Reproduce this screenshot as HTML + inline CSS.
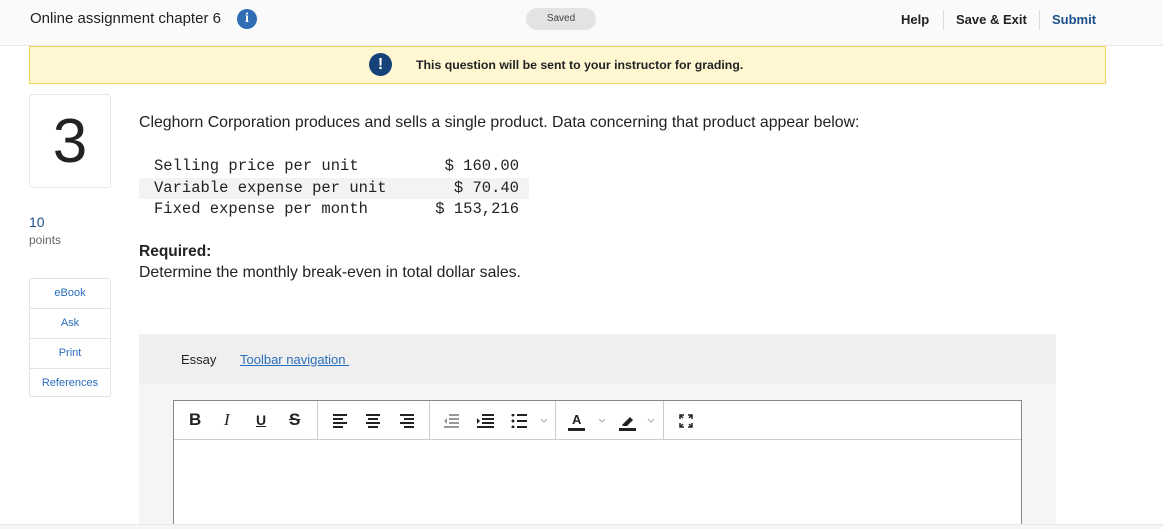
<!DOCTYPE html>
<html><head><meta charset="utf-8"><style>
*{margin:0;padding:0;box-sizing:border-box}
html,body{width:1163px;height:529px;overflow:hidden}
body{background:#fff;font-family:"Liberation Sans",sans-serif;color:#222;position:relative}
.a{position:absolute}
.hdr{left:0;top:0;width:1163px;height:46px;background:#fafafa;border-bottom:1px solid #e8e8e8}
.mono{font-family:"Liberation Mono",monospace;font-size:15.5px;color:#222;white-space:pre}
.side div{height:30px;border-bottom:1px solid #e4e4e4;text-align:center;font-size:11px;color:#2a6ebb;line-height:28px}
.tb{position:absolute;top:0;height:38px;border-right:1px solid #ccc}
.ic{position:absolute;font-size:17px;color:#222;top:9px}
</style></head><body>
<div class="a hdr"></div>
<div class="a" style="left:30px;top:10px;font-size:15px;color:#222">Online assignment chapter 6</div>
<div class="a" style="left:237px;top:9px;width:20px;height:20px;border-radius:50%;background:#2f6db5;color:#fff;font:bold 14px 'Liberation Serif',serif;text-align:center;line-height:20px">i</div>
<div class="a" style="left:526px;top:8px;width:70px;height:22px;border-radius:11px;background:#e3e3e6;font-size:10px;color:#444;text-align:center;line-height:22px">Saved</div>
<div class="a" style="left:901px;top:12px;font-size:13px;font-weight:bold;color:#222">Help</div>
<div class="a" style="left:943px;top:10px;width:1px;height:20px;background:#ddd"></div>
<div class="a" style="left:956px;top:12px;font-size:13px;font-weight:bold;color:#222">Save &amp; Exit</div>
<div class="a" style="left:1039px;top:10px;width:1px;height:20px;background:#ddd"></div>
<div class="a" style="left:1052px;top:12px;font-size:13px;font-weight:bold;color:#1b4f8a">Submit</div>
<div class="a" style="left:29px;top:46px;width:1077px;height:38px;background:#fef7d2;border:1px solid #f4d35e"></div>
<div class="a" style="left:369px;top:53px;width:23px;height:23px;border-radius:50%;background:#16427a;color:#fff;font-weight:bold;font-size:16px;text-align:center;line-height:23px">!</div>
<div class="a" style="left:416px;top:58px;font-size:12.3px;font-weight:bold;color:#222">This question will be sent to your instructor for grading.</div>
<div class="a" style="left:29px;top:94px;width:82px;height:94px;border:1px solid #e6e6e6;border-radius:4px;text-align:center;font-size:62px;line-height:94px;color:#222">3</div>
<div class="a" style="left:29px;top:214px;font-size:14px;color:#1b4f8a">10</div>
<div class="a" style="left:29px;top:233px;font-size:12px;color:#666">points</div>
<div class="a side" style="left:29px;top:278px;width:82px;height:119px;border:1px solid #e4e4e4;border-radius:3px;overflow:hidden"><div>eBook</div><div>Ask</div><div>Print</div><div style="border:0">References</div></div>
<div class="a" style="left:139px;top:114px;font-size:15.85px;color:#222;white-space:nowrap">Cleghorn Corporation produces and sells a single product. Data concerning that product appear below:</div>
<div class="a" style="left:139px;top:178px;width:390px;height:21px;background:#f3f3f3"></div>
<div class="a mono" style="left:154px;top:157px">Selling price per unit</div><div class="a mono" style="right:644px;top:157px">$ 160.00</div>
<div class="a mono" style="left:154px;top:179px">Variable expense per unit</div><div class="a mono" style="right:644px;top:179px">$ 70.40</div>
<div class="a mono" style="left:154px;top:200px">Fixed expense per month</div><div class="a mono" style="right:644px;top:200px">$ 153,216</div>
<div class="a" style="left:139px;top:243px;font-size:15.5px;font-weight:bold">Required:</div>
<div class="a" style="left:139px;top:264px;font-size:15.8px;white-space:nowrap">Determine the monthly break-even in total dollar sales.</div>
<div class="a" style="left:139px;top:334px;width:917px;height:190px;background:#f5f5f5"></div>
<div class="a" style="left:139px;top:334px;width:917px;height:50px;background:#efefef"></div>
<div class="a" style="left:181px;top:352px;font-size:13px;color:#222">Essay</div>
<div class="a" style="left:240px;top:352px;font-size:13px;color:#2a6ebb;text-decoration:underline">Toolbar navigation&nbsp;</div>
<div class="a" style="left:173px;top:400px;width:849px;height:124px;background:#fff;border:1px solid #888;border-bottom:0"></div>
<div class="a" style="left:174px;top:401px;width:847px;height:39px;border-bottom:1px solid #ccc">
<div class="tb" style="left:0;width:144px"></div><div class="tb" style="left:144px;width:112px"></div><div class="tb" style="left:256px;width:126px"></div><div class="tb" style="left:382px;width:108px"></div>
<span class="ic" style="left:15px;font-weight:bold">B</span>
<span class="ic" style="left:50px;font-family:'Liberation Serif';font-style:italic">I</span>
<span class="ic" style="left:82px;font-size:14px;top:11px;text-decoration:underline;font-weight:bold">U</span>
<span class="ic" style="left:115px;text-decoration:line-through;font-weight:bold">S</span>
<svg class="a" style="left:159px;top:13px" width="90" height="14" fill="#222"><rect x="0" y="0" width="14" height="2"/><rect x="0" y="4" width="10" height="2"/><rect x="0" y="8" width="14" height="2"/><rect x="0" y="12" width="10" height="2"/>
<rect x="33" y="0" width="14" height="2"/><rect x="35" y="4" width="10" height="2"/><rect x="33" y="8" width="14" height="2"/><rect x="35" y="12" width="10" height="2"/>
<rect x="67" y="0" width="14" height="2"/><rect x="71" y="4" width="10" height="2"/><rect x="67" y="8" width="14" height="2"/><rect x="71" y="12" width="10" height="2"/></svg>
<svg class="a" style="left:270px;top:13px" width="110" height="14"><g fill="#999"><rect x="5" y="0" width="10" height="2"/><rect x="5" y="4" width="10" height="2"/><rect x="5" y="8" width="10" height="2"/><rect x="0" y="12" width="15" height="2"/><path d="M3 4 L0 7 L3 10Z"/></g>
<g fill="#222"><rect x="38" y="0" width="12" height="2"/><rect x="38" y="4" width="12" height="2"/><rect x="38" y="8" width="12" height="2"/><rect x="33" y="12" width="17" height="2"/><path d="M33 4 L36 7 L33 10Z"/>
<circle cx="69" cy="1" r="1.5"/><circle cx="69" cy="7" r="1.5"/><circle cx="69" cy="13" r="1.5"/><rect x="73" y="0" width="10" height="2"/><rect x="73" y="6" width="10" height="2"/><rect x="73" y="12" width="10" height="2"/></g>
<path d="M97 5 l3 3 l3 -3" stroke="#aaa" fill="none"/></svg>
<span class="ic" style="left:398px;font-size:13px;top:11px;font-weight:bold">A</span><div class="a" style="left:394px;top:27px;width:17px;height:3px;background:#222"></div>
<svg class="a" style="left:424px;top:15px" width="70" height="10"><path d="M1 3 l3 3 l3 -3" stroke="#aaa" fill="none"/><path d="M50 3 l3 3 l3 -3" stroke="#aaa" fill="none"/><path d="M24 9 l8 -8 l3 3 l-8 8z" fill="#222"/></svg>
<div class="a" style="left:445px;top:27px;width:17px;height:3px;background:#222"></div>
<svg class="a" style="left:505px;top:13px" width="14" height="14" stroke="#222" stroke-width="1.5" fill="none"><path d="M1 5V1H5M1 1L4 4M9 1H13V5M13 1L10 4M1 9V13H5M1 13L4 10M13 9V13H9M13 13L10 10"/></svg>
</div>
<div class="a" style="left:0;top:524px;width:1163px;height:5px;background:#f5f5f5;border-top:1px solid #e6e6e6"></div>
</body></html>
